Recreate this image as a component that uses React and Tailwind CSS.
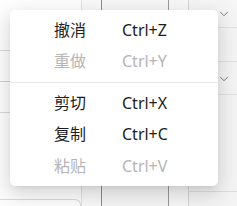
import { ChevronDown } from 'lucide-react';

const ITEMS = [
  { label: '撤消', keys: 'Ctrl+Z' },
  { label: '重做', keys: 'Ctrl+Y', disabled: true },
  { divider: true },
  { label: '剪切', keys: 'Ctrl+X' },
  { label: '复制', keys: 'Ctrl+C' },
  { label: '粘贴', keys: 'Ctrl+V', disabled: true },
];

function Backdrop() {
  return (
    <div className="flex h-full w-full bg-white">
      <div className="flex w-[82px] flex-col border-r border-[#e2e2e2]">
        <div className="h-[51px] border-b border-[#dadada]" />
        <div className="h-[31px] border-b border-[#c9d3e6]" />
        <div className="h-[31px] border-b border-[#dadada]" />
        <div className="flex-1" />
        <div className="h-[7px] rounded-tr-md border-r border-t border-[#dcdcdc]" />
      </div>
      <div className="w-[20px] border-r border-[#8f8f8f] bg-[#fafafa]" />
      <div className="w-[67px] border-r border-[#9a9a9a] bg-[#f7f7f7]" />
      <div className="w-[20px] border-r border-[#d6d6d6] bg-[#f9f9f9]" />
      <div className="flex flex-1 flex-col bg-[#f6f6f6]">
        <div className="flex h-[28px] border-b border-[#e4e4e4]">
          <div className="flex w-[21px] items-end pb-[8px] pl-[2px]">
            <span className="h-[3px] w-[6px] bg-[#3b82f6]" />
          </div>
          <div className="flex flex-1 items-center justify-center">
            <ChevronDown size={14} strokeWidth={1.5} className="text-[#6b6b6b]" />
          </div>
        </div>
        <div className="h-[34px] border-b border-[#e4e4e4]" />
        <div className="flex h-[33px] border-b border-[#e4e4e4]">
          <div className="w-[21px]" />
          <div className="flex flex-1 items-start justify-center pt-[10px]">
            <ChevronDown size={14} strokeWidth={1.5} className="text-[#6b6b6b]" />
          </div>
        </div>
        <div className="h-[97px] border-b border-[#e0e0e0]" />
        <div className="flex-1" />
      </div>
    </div>
  );
}

function MenuRow({ label, keys, disabled }) {
  return (
    <div
      className={`flex h-[31.5px] items-center pl-[44px] text-[16px] ${
        disabled ? 'text-[#b5b5b5]' : 'text-[#1c1c1c]'
      }`}
    >
      <span className="w-[68px]">{label}</span>
      <span>{keys}</span>
    </div>
  );
}

export default function App() {
  return (
    <div
      className="relative h-[206px] w-[237px] overflow-hidden"
      style={{ fontFamily: '"Noto Sans", "Noto Sans CJK SC", sans-serif' }}
    >
      <Backdrop />
      <div className="absolute left-[10px] top-[10px] w-[208px] rounded-[5px] bg-white py-[4px] shadow-[0_6px_16px_0_rgba(0,0,0,0.1),0_3px_6px_-4px_rgba(0,0,0,0.14),0_9px_28px_8px_rgba(0,0,0,0.07)]">
        {ITEMS.map((it, i) =>
          it.divider ? (
            <div key={i} className="my-[4.5px] h-px bg-[#e8e8e8]" />
          ) : (
            <MenuRow key={i} {...it} />
          )
        )}
      </div>
    </div>
  );
}
